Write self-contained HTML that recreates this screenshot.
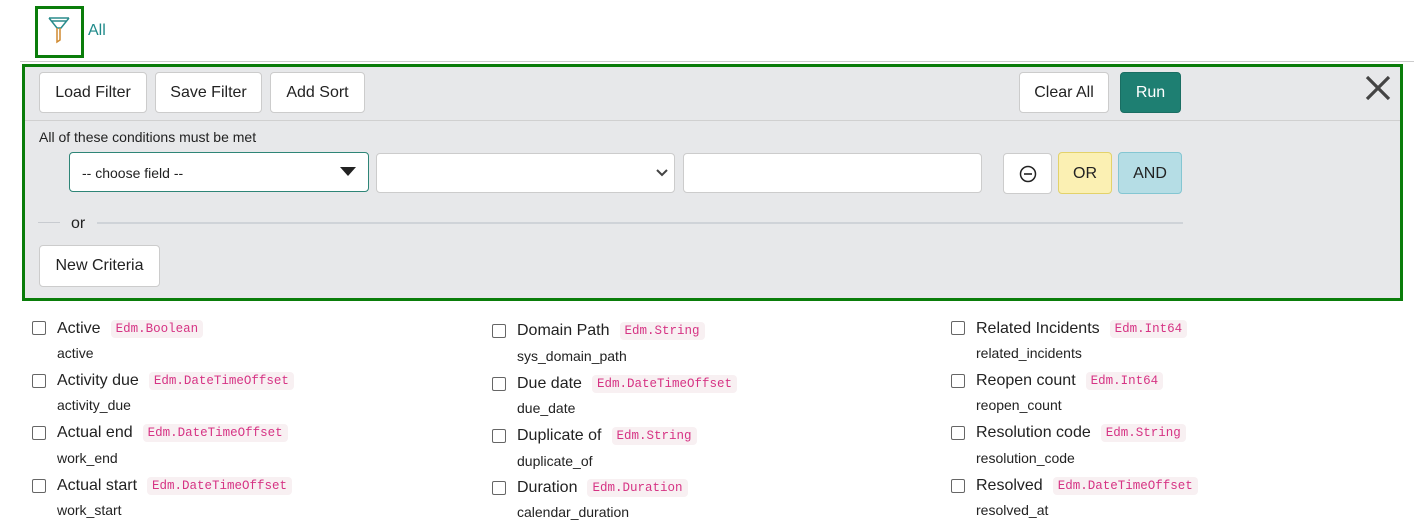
<!DOCTYPE html>
<html><head><meta charset="utf-8"><style>
*{box-sizing:border-box;margin:0;padding:0}
body{width:1414px;height:520px;background:#fff;font-family:"Liberation Sans",sans-serif;color:#222;position:relative;overflow:hidden}
.a{position:absolute}
.btn{position:absolute;background:#fff;border:1px solid #ccc;border-radius:4px;font-size:16px;display:flex;align-items:center;justify-content:center;color:#222}
.cb{position:absolute;width:14px;height:14px;border:1.5px solid #666;border-radius:2px;background:#fff}
.lb{position:absolute;font-size:16px;color:#222;white-space:nowrap}
.nm{position:absolute;font-size:14px;color:#222;white-space:nowrap}
.tag{font-family:"Liberation Mono",monospace;font-size:12.5px;color:#d63384;background:#f8f0f2;border-radius:4px;padding:2px 5px;margin-left:10px;vertical-align:1px}
</style></head><body>
<div class="a" style="left:35px;top:6px;width:49px;height:52px;border:3px solid #0a7d0a"></div>
<svg class="a" style="left:47px;top:16px" width="24" height="28" viewBox="0 0 24 28"><path d="M2 2H22M2 2L10 12H14L22 2M4 5H20" fill="none" stroke="#2a8c8c" stroke-width="1.5"/><path d="M10 12V26L13 24V12" fill="none" stroke="#d08a30" stroke-width="1.5"/></svg>
<div class="a" style="left:88px;top:22px;font-size:16px;color:#1f8a8a">All</div>
<div class="a" style="left:20px;top:61px;width:1394px;height:1px;background:#ccc"></div>
<div class="a" style="left:22px;top:64px;width:1381px;height:237px;background:#e7e8ea;border:3px solid #0a7d0a"></div>
<div class="a" style="left:25px;top:120px;width:1375px;height:1px;background:#d0d0d0"></div>
<div class="btn" style="left:39px;top:72px;width:108px;height:41px">Load Filter</div>
<div class="btn" style="left:155px;top:72px;width:107px;height:41px">Save Filter</div>
<div class="btn" style="left:270px;top:72px;width:95px;height:41px">Add Sort</div>
<div class="btn" style="left:1019px;top:72px;width:90px;height:41px">Clear All</div>
<div class="btn" style="left:1120px;top:72px;width:61px;height:41px;background:#1e7f72;border-color:#1a6e63;color:#fff">Run</div>
<svg class="a" style="left:1365px;top:76px" width="26" height="24" viewBox="0 0 26 24"><path d="M2 1L24 23M24 1L2 23" stroke="#444" stroke-width="3.2"/></svg>
<div class="a" style="left:39px;top:129px;font-size:14px;color:#222">All of these conditions must be met</div>
<div class="a" style="left:69px;top:152px;width:300px;height:40px;background:#fff;border:1px solid #2e8577;border-radius:4px;font-size:14px;padding:12px 12px;color:#222">-- choose field --</div>
<svg class="a" style="left:340px;top:167px" width="16" height="10"><path d="M0 0H16L8 9Z" fill="#222"/></svg>
<div class="a" style="left:376px;top:153px;width:299px;height:40px;background:#fff;border:1px solid #ccc;border-radius:4px"></div>
<svg class="a" style="left:656px;top:169px" width="12" height="8"><path d="M1 1L6 6L11 1" fill="none" stroke="#444" stroke-width="2"/></svg>
<div class="a" style="left:683px;top:153px;width:299px;height:40px;background:#fff;border:1px solid #ccc;border-radius:4px"></div>
<div class="btn" style="left:1003px;top:153px;width:49px;height:41px"><svg width="18" height="18"><circle cx="9" cy="9" r="7.5" fill="none" stroke="#222" stroke-width="1.5"/><path d="M5 9H13" stroke="#222" stroke-width="1.6"/></svg></div>
<div class="btn" style="left:1058px;top:152px;width:54px;height:42px;background:#fbf0b3;border-color:#e3d26a;padding-top:2px">OR</div>
<div class="btn" style="left:1118px;top:152px;width:64px;height:42px;background:#b5dde5;border-color:#84c6d2;padding-top:2px">AND</div>
<div class="a" style="left:38px;top:222px;width:22px;height:1px;background:#c8cbd0"></div>
<div class="a" style="left:71px;top:215px;font-size:16px">or</div>
<div class="a" style="left:97px;top:222px;width:1086px;height:2px;background:#cfd3d8"></div>
<div class="btn" style="left:39px;top:245px;width:121px;height:42px">New Criteria</div>

<div class="cb" style="left:32px;top:321px"></div><div class="lb" style="left:57px;top:320px">Active<span class="tag">Edm.Boolean</span></div><div class="nm" style="left:57px;top:345px">active</div>
<div class="cb" style="left:32px;top:374px"></div><div class="lb" style="left:57px;top:372px">Activity due<span class="tag">Edm.DateTimeOffset</span></div><div class="nm" style="left:57px;top:397px">activity_due</div>
<div class="cb" style="left:32px;top:426px"></div><div class="lb" style="left:57px;top:424px">Actual end<span class="tag">Edm.DateTimeOffset</span></div><div class="nm" style="left:57px;top:450px">work_end</div>
<div class="cb" style="left:32px;top:479px"></div><div class="lb" style="left:57px;top:477px">Actual start<span class="tag">Edm.DateTimeOffset</span></div><div class="nm" style="left:57px;top:502px">work_start</div>

<div class="cb" style="left:492px;top:324px"></div><div class="lb" style="left:517px;top:322px">Domain Path<span class="tag">Edm.String</span></div><div class="nm" style="left:517px;top:348px">sys_domain_path</div>
<div class="cb" style="left:492px;top:377px"></div><div class="lb" style="left:517px;top:375px">Due date<span class="tag">Edm.DateTimeOffset</span></div><div class="nm" style="left:517px;top:400px">due_date</div>
<div class="cb" style="left:492px;top:429px"></div><div class="lb" style="left:517px;top:427px">Duplicate of<span class="tag">Edm.String</span></div><div class="nm" style="left:517px;top:453px">duplicate_of</div>
<div class="cb" style="left:492px;top:481px"></div><div class="lb" style="left:517px;top:479px">Duration<span class="tag">Edm.Duration</span></div><div class="nm" style="left:517px;top:504px">calendar_duration</div>

<div class="cb" style="left:951px;top:321px"></div><div class="lb" style="left:976px;top:320px">Related Incidents<span class="tag">Edm.Int64</span></div><div class="nm" style="left:976px;top:345px">related_incidents</div>
<div class="cb" style="left:951px;top:374px"></div><div class="lb" style="left:976px;top:372px">Reopen count<span class="tag">Edm.Int64</span></div><div class="nm" style="left:976px;top:397px">reopen_count</div>
<div class="cb" style="left:951px;top:426px"></div><div class="lb" style="left:976px;top:424px">Resolution code<span class="tag">Edm.String</span></div><div class="nm" style="left:976px;top:450px">resolution_code</div>
<div class="cb" style="left:951px;top:479px"></div><div class="lb" style="left:976px;top:477px">Resolved<span class="tag">Edm.DateTimeOffset</span></div><div class="nm" style="left:976px;top:502px">resolved_at</div>
</body></html>
